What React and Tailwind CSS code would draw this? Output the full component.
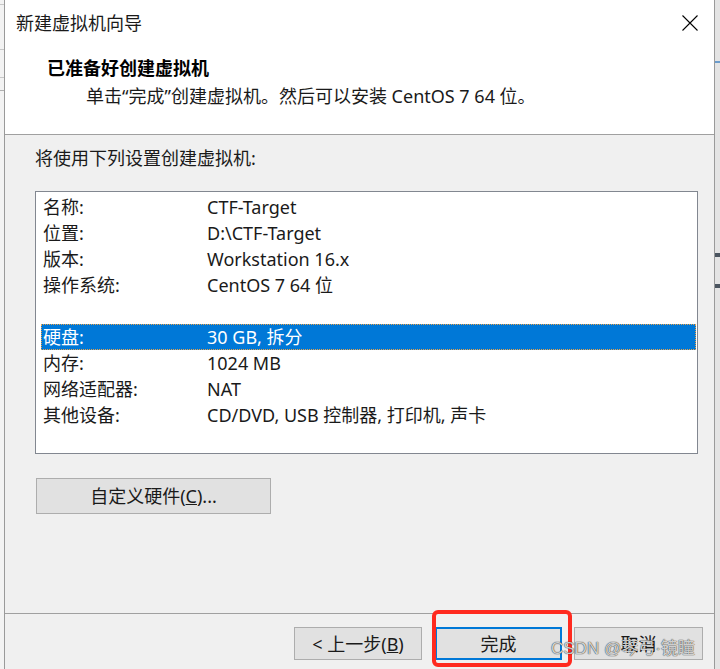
import { useState } from "react";

const rows = [
  { label: "名称:", value: "CTF-Target" },
  { label: "位置:", value: "D:\\CTF-Target" },
  { label: "版本:", value: "Workstation 16.x" },
  { label: "操作系统:", value: "CentOS 7 64 位" },
  { label: "", value: "" },
  { label: "硬盘:", value: "30 GB, 拆分" },
  { label: "内存:", value: "1024 MB" },
  { label: "网络适配器:", value: "NAT" },
  { label: "其他设备:", value: "CD/DVD, USB 控制器, 打印机, 声卡" },
];

function CloseIcon() {
  return (
    <svg width="16" height="16" viewBox="0 0 16 16" className="block">
      <path d="M0.5 0.5 L15.5 15.5 M15.5 0.5 L0.5 15.5" stroke="#000" strokeWidth="1.1" fill="none" />
    </svg>
  );
}

export default function App() {
  const [selected, setSelected] = useState(5);

  return (
    <div className="relative flex h-[669px] w-[720px] overflow-hidden bg-[#f0f0f0] font-['Noto_Sans','Noto_Sans_CJK_SC',sans-serif] text-[18px] text-[#1a1a1a]">
      {/* sliver of the app behind, left */}
      <div className="flex w-[4px] flex-col bg-[#f3f3f3]">
        <div className="mt-[4px] h-px bg-[#c8c8c8]" />
        <div className="mt-[44px] h-px bg-[#c8c8c8]" />
        <div className="mt-[27px] h-px bg-[#c8c8c8]" />
        <div className="mt-[12px] h-px bg-[#b0b0b0]" />
      </div>

      {/* wizard window */}
      <div className="flex w-[711px] flex-col border-x border-[#9a9a9a] bg-[#f0f0f0]">
        <div className="h-[135px] border-b border-[#a0a0a0] bg-white">
          <div className="flex h-[45px] items-center justify-between pl-[11px] pr-[16px]">
            <span className="leading-none">新建虚拟机向导</span>
            <CloseIcon />
          </div>
          <div className="mt-[11px] pl-[42px] font-bold leading-[24px] text-black">已准备好创建虚拟机</div>
          <div className="mt-[4px] pl-[81px] leading-[24px]">单击“完成”创建虚拟机。然后可以安装 CentOS 7 64 位。</div>
        </div>

        <div className="flex h-[478px] flex-col pl-[30px] pt-[11px]">
          <div className="leading-[24px]">将使用下列设置创建虚拟机:</div>
          <div className="mt-[21px] h-[263px] w-[663px] border border-[#828790] bg-white pl-[5px] pr-[1px] pt-[2px]">
            {rows.map((r, i) => (
              <div
                key={i}
                onClick={() => setSelected(i)}
                className={
                  i === selected
                    ? "flex h-[26px] items-center bg-[#0078d7] text-white outline-1 outline-dotted -outline-offset-1 outline-[#e9a24a]"
                    : "flex h-[26px] items-center"
                }
              >
                <span className="w-[166px] pl-[2px] leading-none">{r.label}</span>
                <span className="leading-none">{r.value}</span>
              </div>
            ))}
          </div>
          <button className="ml-[1px] mt-[24px] flex h-[36px] w-[235px] items-center justify-center border border-[#adadad] bg-[#e1e1e1] leading-none">
            自定义硬件(<u>C</u>)...
          </button>
        </div>

        <div className="flex flex-1 justify-end border-t border-[#a0a0a0] pr-[11px] pt-[13px]">
          <button className="flex h-[33px] w-[128px] items-center justify-center border border-[#adadad] bg-[#e1e1e1] leading-none">
            &lt; 上一步(<u>B</u>)
          </button>
          <button className="ml-[13px] flex h-[33px] w-[127px] items-center justify-center border-2 border-[#0078d7] bg-[#e1e1e1] leading-none">
            完成
          </button>
          <button className="ml-[12px] flex h-[33px] w-[129px] items-center justify-center border border-[#adadad] bg-[#e1e1e1] leading-none">
            取消
          </button>
        </div>
      </div>

      {/* sliver of the app behind, right */}
      <div className="flex w-[5px] flex-col bg-[#e4e4e4]">
        <div className="mt-[61px] h-[2px] bg-[#6b9ccc]" />
        <div className="mt-[190px] h-[4px] bg-[#4b5560]" />
        <div className="mt-[27px] h-[4px] bg-[#4b5560]" />
      </div>

      {/* annotation + watermark over the screenshot */}
      <div className="absolute left-[432px] top-[610px] h-[57px] w-[140px] rounded-[6px] border-4 border-[#ff2a1f]" />
      <div className="absolute left-[551px] top-[637px] whitespace-nowrap font-['Liberation_Sans','Noto_Sans_CJK_SC',sans-serif] text-[17px] leading-[24px] text-[rgba(255,255,255,0.8)] [text-shadow:0_0_1px_rgba(0,0,0,0.8),0_0_1px_rgba(0,0,0,0.6)]">
        CSDN @琴弓·镜瞳
      </div>
    </div>
  );
}
